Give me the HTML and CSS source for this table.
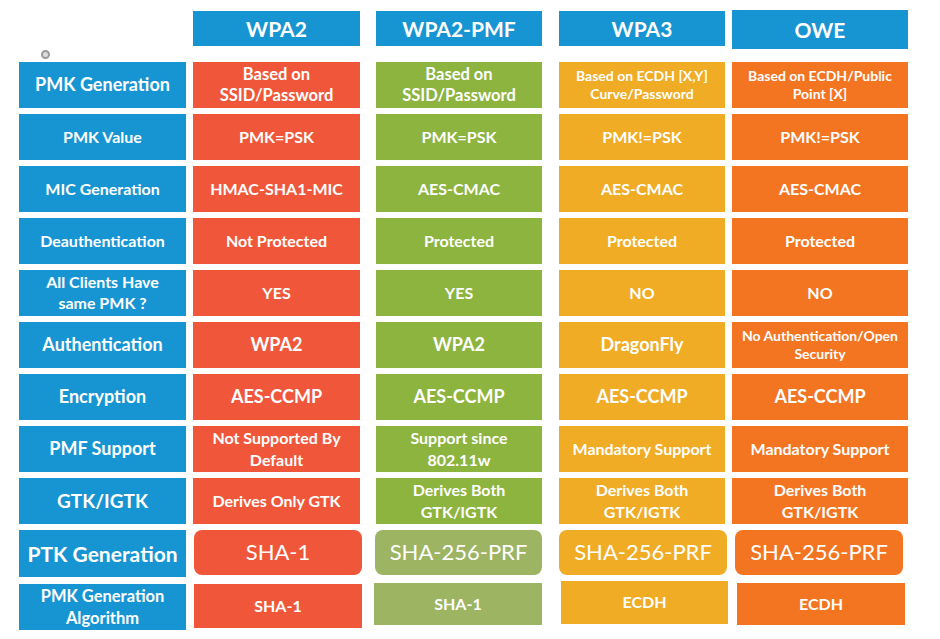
FILE: index.html
```html
<!DOCTYPE html>
<html>
<head>
<meta charset="utf-8">
<link rel="stylesheet" href="styles.css">
</head>
<body>
<div class="table">
  <span class="dot"></span>
  <div class="row head">
    <div class="spacer"></div>
    <div class="cell c2 hd">WPA2</div>
    <div class="cell c3 hd">WPA2-PMF</div>
    <div class="cell c4 hd">WPA3</div>
    <div class="cell c5 hd owe-hd">OWE</div>
  </div>

  <div class="row">
    <div class="cell lbl big-lbl">PMK Generation</div>
    <div class="cell c2 red sm2">Based on<br>SSID/Password</div>
    <div class="cell c3 green sm2">Based on<br>SSID/Password</div>
    <div class="cell c4 yellow xs">Based on ECDH [X,Y]<br>Curve/Password</div>
    <div class="cell c5 orange xs">Based on ECDH/Public<br>Point [X]</div>
  </div>

  <div class="row">
    <div class="cell lbl">PMK Value</div>
    <div class="cell c2 red md">PMK=PSK</div>
    <div class="cell c3 green md">PMK=PSK</div>
    <div class="cell c4 yellow md">PMK!=PSK</div>
    <div class="cell c5 orange md">PMK!=PSK</div>
  </div>

  <div class="row">
    <div class="cell lbl">MIC Generation</div>
    <div class="cell c2 red md">HMAC-SHA1-MIC</div>
    <div class="cell c3 green md">AES-CMAC</div>
    <div class="cell c4 yellow md">AES-CMAC</div>
    <div class="cell c5 orange md">AES-CMAC</div>
  </div>

  <div class="row">
    <div class="cell lbl">Deauthentication</div>
    <div class="cell c2 red md">Not Protected</div>
    <div class="cell c3 green md">Protected</div>
    <div class="cell c4 yellow md">Protected</div>
    <div class="cell c5 orange md">Protected</div>
  </div>

  <div class="row">
    <div class="cell lbl sm-lbl">All Clients Have<br>same PMK ?</div>
    <div class="cell c2 red md">YES</div>
    <div class="cell c3 green md">YES</div>
    <div class="cell c4 yellow md">NO</div>
    <div class="cell c5 orange md">NO</div>
  </div>

  <div class="row">
    <div class="cell lbl big-lbl">Authentication</div>
    <div class="cell c2 red lg">WPA2</div>
    <div class="cell c3 green lg">WPA2</div>
    <div class="cell c4 yellow lg">DragonFly</div>
    <div class="cell c5 orange xs">No Authentication/Open<br>Security</div>
  </div>

  <div class="row">
    <div class="cell lbl big-lbl">Encryption</div>
    <div class="cell c2 red lg">AES-CCMP</div>
    <div class="cell c3 green lg">AES-CCMP</div>
    <div class="cell c4 yellow lg">AES-CCMP</div>
    <div class="cell c5 orange lg">AES-CCMP</div>
  </div>

  <div class="row">
    <div class="cell lbl big-lbl">PMF Support</div>
    <div class="cell c2 red sm3">Not Supported By<br>Default</div>
    <div class="cell c3 green sm3">Support since<br>802.11w</div>
    <div class="cell c4 yellow md">Mandatory Support</div>
    <div class="cell c5 orange md">Mandatory Support</div>
  </div>

  <div class="row">
    <div class="cell lbl big-lbl gtk-lbl">GTK/IGTK</div>
    <div class="cell c2 red md">Derives Only GTK</div>
    <div class="cell c3 green sm3">Derives Both<br>GTK/IGTK</div>
    <div class="cell c4 yellow sm3">Derives Both<br>GTK/IGTK</div>
    <div class="cell c5 orange sm3">Derives Both<br>GTK/IGTK</div>
  </div>

  <div class="row ptk">
    <div class="cell lbl huge-lbl">PTK Generation</div>
    <div class="cell c2 red xl round">SHA-1</div>
    <div class="cell c3 olive xl round">SHA-256-PRF</div>
    <div class="cell c4 yellow xl round">SHA-256-PRF</div>
    <div class="cell c5 orange xl round">SHA-256-PRF</div>
  </div>

  <div class="row alg">
    <div class="cell lbl alg-lbl">PMK Generation<br>Algorithm</div>
    <div class="cell c2 red md">SHA-1</div>
    <div class="cell c3 olive md">SHA-1</div>
    <div class="cell c4 yellow md">ECDH</div>
    <div class="cell c5 orange md">ECDH</div>
  </div>
</div>
</body>
</html>
```
FILE: styles.css
```css
html, body {
  margin: 0;
  padding: 0;
  background: #ffffff;
}

body {
  width: 940px;
  height: 639px;
  overflow: hidden;
  font-family: Lato, "Open Sans", "Liberation Sans", sans-serif;
  color: #ffffff;
}

.table {
  position: relative;
  padding: 11px 0 0 19px;
  display: flex;
  flex-direction: column;
  gap: 6px;
}

.dot {
  position: absolute;
  left: 41px;
  top: 50px;
  width: 5px;
  height: 5px;
  border: 2px solid #9a9a9a;
  border-radius: 50%;
  background: #dcdcdc;
}

.row {
  display: flex;
  height: 46px;
}

.row.head {
  height: 35px;
  margin-bottom: 10px;
  align-items: flex-start;
}

.spacer {
  width: 167px;
}

.cell {
  display: flex;
  align-items: center;
  justify-content: center;
  text-align: center;
  font-weight: 700;
  width: 166px;
  line-height: 1.3;
  box-sizing: border-box;
}

.lbl {
  width: 167px;
  background: #1795d2;
  font-size: 16px;
}

.c2 { margin-left: 7px; width: 167px; }
.c3 { margin-left: 16px; width: 166px; }
.c4 { margin-left: 17px; width: 166px; }
.c5 { margin-left: 7px; width: 176px; }

.hd {
  height: 35px;
  background: #1795d2;
  font-size: 21px;
  font-weight: 700;
}

.owe-hd {
  height: 39px;
  margin-top: -1px;
}

.red { background: #f0573a; }
.green { background: #8cb43f; }
.olive { background: #9db462; }
.yellow { background: #f0ac25; }
.orange { background: #f37522; }

.xs { font-size: 14px; line-height: 1.3; }
.sm2 { font-size: 16.5px; line-height: 1.3; }
.sm3 { font-size: 16px; line-height: 1.35; }
.md { font-size: 16px; }
.lg { font-size: 18px; }
.xl { font-size: 22px; font-weight: 400; }

.sm-lbl { font-size: 16px; line-height: 1.3; }
.alg-lbl { font-size: 16.5px; line-height: 1.35; }
.big-lbl { font-size: 18px; }
.gtk-lbl { font-size: 19px; }
.huge-lbl { font-size: 21px; }

.round { border-radius: 8px; }

.row.ptk .lbl { height: 47px; }
.row.ptk .c2 { margin-left: 8px; width: 168px; height: 45px; }
.row.ptk .c3 { margin-left: 13px; width: 167px; height: 45px; }
.row.ptk .c4 { margin-left: 17px; width: 168px; height: 45px; }
.row.ptk .c5 { margin-left: 8px; width: 168px; height: 45px; }

.row.alg {
  margin-top: 2px;
}

.row.alg .c2 { margin-left: 8px; width: 168px; height: 44px; }
.row.alg .c3 { margin-left: 12px; width: 168px; height: 42px; margin-top: -1px; }
.row.alg .c4 { margin-left: 19px; width: 167px; height: 43px; margin-top: -3px; }
.row.alg .c5 { margin-left: 9px; width: 168px; height: 42px; margin-top: -1px; }
```
